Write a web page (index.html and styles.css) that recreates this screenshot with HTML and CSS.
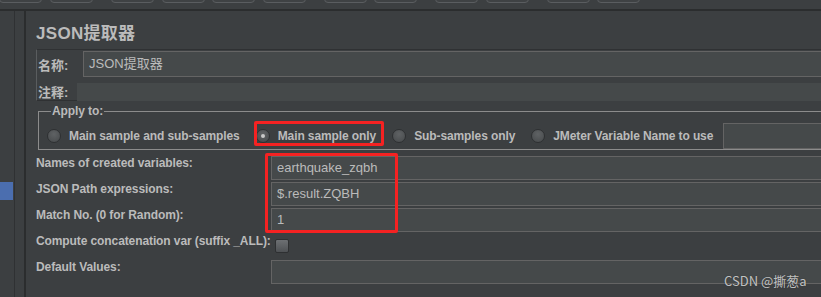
FILE: index.html
```html
<!DOCTYPE html>
<html>
<head>
<meta charset="utf-8">
<link rel="stylesheet" href="styles.css">
</head>
<body>
<div class="toolbar">
  <span class="tb"></span><span class="tb g8"></span><span class="tb g18"></span><span class="tb g8"></span><span class="tb g7"></span><span class="tb g8"></span><span class="tb g18"></span><span class="tb g7"></span><span class="tb g18"></span><span class="tb g8"></span><span class="tb g18"></span><span class="tb g7"></span>
</div>
<div class="main">
  <div class="tree"><div class="tree-sel"></div></div>
  <div class="gutter"></div>
  <div class="content">
    <div class="title">JSON提取器</div>
    <div class="namebox">
      <div class="nrow">
        <span class="nlabel">名称:</span>
        <div class="field namefield">JSON提取器</div>
      </div>
      <div class="nrow">
        <span class="nlabel">注释:</span>
        <div class="commentfield"></div>
      </div>
    </div>
    <fieldset class="apply">
      <legend>Apply to:</legend>
      <div class="radios">
        <span class="radio"></span><span class="rlabel">Main sample and sub-samples</span>
        <span class="radio on"></span><span class="rlabel">Main sample only</span>
        <span class="radio"></span><span class="rlabel">Sub-samples only</span>
        <span class="radio"></span><span class="rlabel">JMeter Variable Name to use</span>
        <div class="field varfield"></div>
      </div>
      <div class="mark mark1"></div>
    </fieldset>
    <div class="form">
      <span class="flabel">Names of created variables:</span><div class="field">earthquake_zqbh</div>
      <span class="flabel">JSON Path expressions:</span><div class="field">$.result.ZQBH</div>
      <span class="flabel">Match No. (0 for Random):</span><div class="field">1</div>
      <span class="flabel">Compute concatenation var (suffix _ALL):</span><div class="checkcell"><span class="check"></span></div>
      <span class="flabel">Default Values:</span><div class="field"></div>
      <div class="mark mark2"></div>
    </div>
  </div>
</div>
<div class="watermark">CSDN @撕葱a</div>
</body>
</html>
```
FILE: styles.css
```css
html, body {
  margin: 0;
  padding: 0;
}
body {
  width: 821px;
  height: 297px;
  overflow: hidden;
  background: #3c3f41;
  color: #bbbbbb;
  font-family: "Liberation Sans", "Noto Sans CJK SC", sans-serif;
  position: relative;
}
.toolbar {
  height: 9px;
  overflow: hidden;
  display: flex;
  border-bottom: 2px solid #2b2d2e;
  background: #3c3f41;
}
.tb {
  flex: none;
  width: 43px;
  height: 12px;
  margin-top: -9px;
  border: 1px solid #5a5d60;
  border-radius: 4px;
  box-sizing: border-box;
  background: #3f4244;
}
.tb:first-child { width: 43px; margin-left: -1px; }
.g7 { margin-left: 7px; }
.g8 { margin-left: 8px; }
.g18 { margin-left: 18px; }

.main {
  display: flex;
  height: 286px;
}
.tree {
  width: 14px;
  border-right: 1px solid #2f3133;
  background: #3c3f41;
  padding-top: 171px;
  box-sizing: content-box;
}
.tree-sel {
  height: 18px;
  background: #4b6eaf;
  margin-right: 1px;
}
.gutter {
  width: 9px;
  border-right: 2px solid #2b2d2e;
}
.content {
  flex: 1;
  padding-left: 10px;
  min-width: 0;
  position: relative;
}
.title {
  padding-top: 13px;
  line-height: 20px;
  height: 20px;
  margin-bottom: 5px;
  font-size: 17px;
  font-weight: bold;
  letter-spacing: 0.3px;
  color: #bbbbbb;
}
.namebox {
  margin-right: -10px;
  border: 1px solid #2f3133;
  border-left-color: #5a5d5f;
  padding-top: 1px;
  height: 52px;
  box-sizing: border-box;
}
.nrow {
  display: flex;
  align-items: center;
}
.nrow + .nrow { margin-top: 5px; }
.nlabel {
  font-size: 13px;
  font-weight: bold;
  padding-left: 1px;
  width: 45px;
  flex: none;
}
.nrow + .nrow .nlabel { width: 39px; }
.field {
  height: 24px;
  box-sizing: border-box;
  border: 1px solid #646464;
  background: #45494a;
  font-size: 13px;
  line-height: 22px;
  padding-left: 5px;
  color: #bbbbbb;
  white-space: nowrap;
}
.namefield {
  flex: 1;
  height: 26px;
  line-height: 24px;
}
.commentfield {
  flex: 1;
  height: 18px;
  background: #45494a;
}
.apply {
  margin: 3px -20px 0 2px;
  padding: 4px 0 0 8px;
  border: 1px solid #8c8c8c;
  min-width: 0;
  position: relative;
}
.apply legend {
  font-size: 12px;
  font-weight: bold;
  line-height: 14px;
  padding: 0 1px;
  margin-left: 4px;
  letter-spacing: -0.1px;
}
.radios {
  display: flex;
  align-items: center;
  height: 27px;
}
.radio {
  flex: none;
  width: 14px;
  height: 14px;
  border-radius: 50%;
  box-sizing: border-box;
  border: 1px solid #2e3032;
  background: radial-gradient(circle at 50% 35%, #5f6264 0%, #505355 60%, #46494b 100%);
  margin-left: 16px;
  position: relative;
}
.radios .radio:first-child { margin-left: 0; }
.radio.on::after {
  content: "";
  position: absolute;
  left: 4px;
  top: 4px;
  width: 4px;
  height: 4px;
  border-radius: 50%;
  background: #c8c8c8;
}
.rlabel {
  flex: none;
  margin-left: 8px;
  font-size: 12px;
  font-weight: bold;
  letter-spacing: -0.1px;
}
.varfield {
  flex: 1;
  height: 26px;
  margin-left: 10px;
}
.form {
  margin-top: 6px;
  margin-right: -10px;
  display: grid;
  grid-template-columns: 235px 1fr;
  grid-auto-rows: 24px;
  row-gap: 2px;
  align-items: center;
  position: relative;
}
.flabel {
  align-self: start;
  line-height: 14px;
  font-size: 12px;
  font-weight: bold;
  white-space: nowrap;
  letter-spacing: -0.1px;
}
.checkcell {
  display: flex;
  align-items: center;
  padding-left: 4px;
}
.check {
  width: 14px;
  height: 14px;
  box-sizing: border-box;
  border: 1px solid #2e3032;
  border-radius: 2px;
  background: linear-gradient(#6d7073, #4e5154);
}
.mark {
  position: absolute;
  border: 3px solid #f52222;
  border-radius: 2px;
  box-sizing: border-box;
}
.mark1 {
  left: 215px;
  top: 3px;
  width: 130px;
  height: 25px;
}
.mark2 {
  left: 229px;
  top: -3px;
  width: 133px;
  height: 80px;
}
.watermark {
  position: absolute;
  left: 724px;
  top: 272px;
  font-family: "Noto Sans CJK SC", sans-serif;
  font-size: 13px;
  line-height: 18px;
  color: rgba(235, 235, 235, 0.8);
  text-shadow: 0 0 1px rgba(0,0,0,0.5);
}
```
